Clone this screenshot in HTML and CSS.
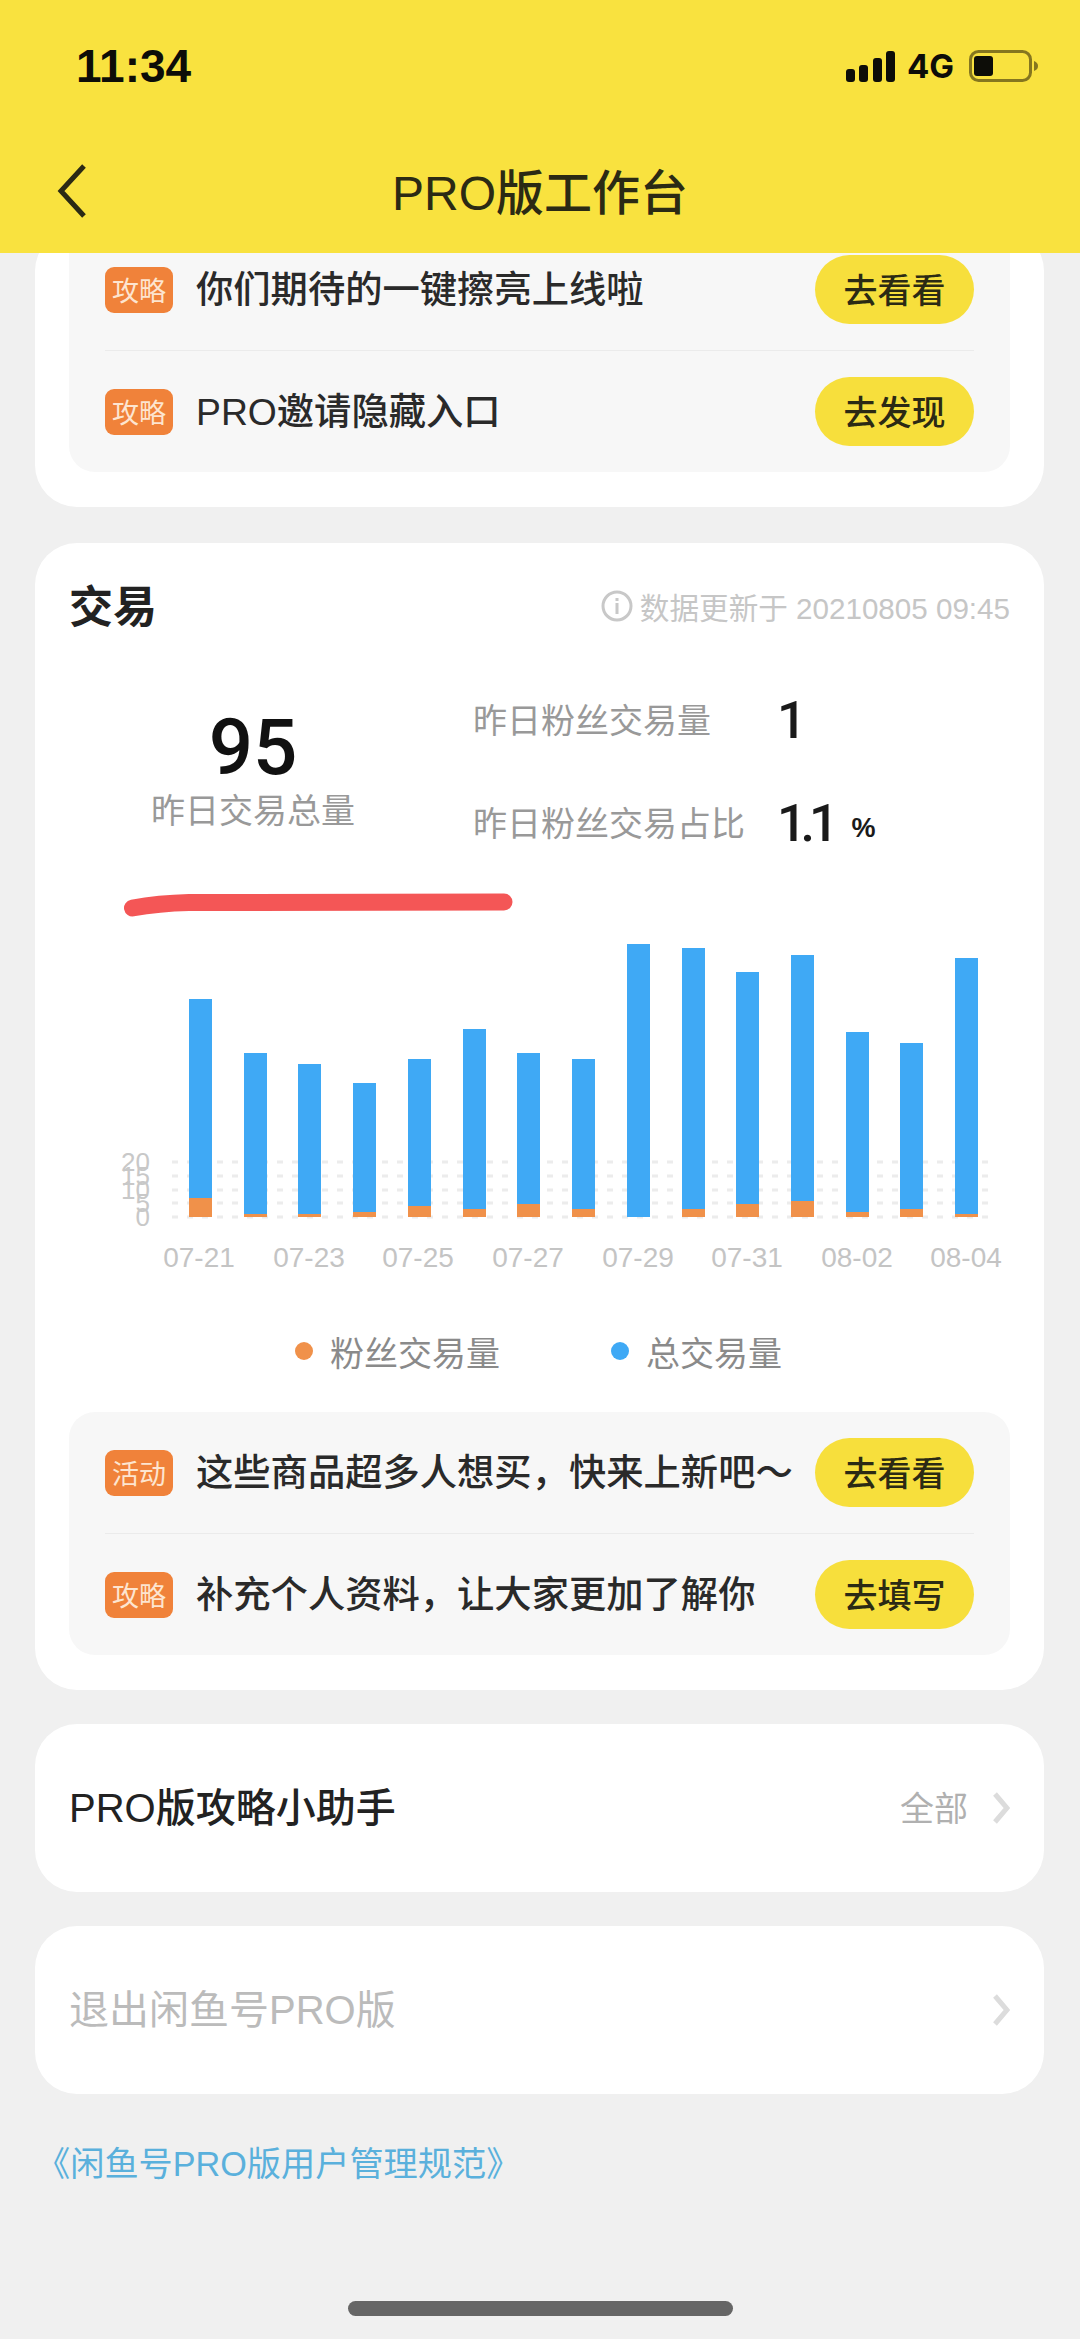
FILE: index.html
```html
<!DOCTYPE html>
<html lang="zh-CN">
<head>
  <meta charset="UTF-8">
  <title>PRO版工作台</title>
  <link rel="stylesheet" href="styles.css">
</head>
<body>

<!-- Header -->
<header class="header">
  <div class="status-bar">
    <span class="time">11:34</span>
    <div class="status-icons">
      <svg class="signal" width="50" height="32" viewBox="0 0 50 32">
        <rect x="0" y="19" width="9" height="13" rx="3"/>
        <rect x="13" y="15" width="9" height="17" rx="3"/>
        <rect x="27" y="8" width="9" height="24" rx="3"/>
        <rect x="40" y="1" width="9" height="31" rx="3"/>
      </svg>
      <span class="network">4G</span>
      <svg class="battery" width="70" height="32" viewBox="0 0 70 32">
        <rect x="1.5" y="1.5" width="60" height="29" rx="8" fill="none" stroke="#85761f" stroke-width="3"/>
        <rect x="5" y="6" width="19" height="20" rx="3" fill="#0d0d08"/>
        <path d="M65 11c3 1 4 3 4 5s-1 4-4 5z" fill="#85761f"/>
      </svg>
    </div>
  </div>
  <nav class="nav">
    <svg class="back" width="32" height="56" viewBox="0 0 32 56">
      <path d="M28 3 5 28l23 25" fill="none" stroke="#2b2a14" stroke-width="5"/>
    </svg>
    <h1 class="nav-title">PRO版工作台</h1>
    <span></span>
  </nav>
</header>

<main class="content">

  <section class="card card-scrolled">
    <div class="tips">
      <div class="tip">
        <span class="tag">攻略</span>
        <span class="tip-text">你们期待的一键擦亮上线啦</span>
        <span class="btn">去看看</span>
      </div>
      <div class="tip">
        <span class="tag">攻略</span>
        <span class="tip-text">PRO邀请隐藏入口</span>
        <span class="btn">去发现</span>
      </div>
    </div>
  </section>

  <section class="card card-trade">
    <div class="card-head">
      <h2 class="card-title">交易</h2>
      <div class="updated">
        <svg width="32" height="32" viewBox="0 0 32 32">
          <circle cx="16" cy="16" r="14" fill="none" stroke="#c8c8c8" stroke-width="3"/>
          <rect x="14.5" y="13" width="3" height="11" fill="#c8c8c8"/>
          <rect x="14.5" y="8" width="3" height="3" fill="#c8c8c8"/>
        </svg>
        <span>数据更新于 20210805 09:45</span>
      </div>
    </div>

    <div class="stats">
      <div class="stat-main">
        <div class="stat-num">95</div>
        <div class="stat-label">昨日交易总量</div>
      </div>
      <div class="stat-side">
        <div class="stat-row">
          <span class="stat-label">昨日粉丝交易量</span>
          <span class="stat-val">1</span>
        </div>
        <div class="stat-row">
          <span class="stat-label">昨日粉丝交易占比</span>
          <span class="stat-val">1.1</span>
          <span class="stat-unit">%</span>
        </div>
      </div>
    </div>

    <!-- Red marker stroke drawn over the screenshot -->
    <svg class="marker" width="400" height="30" viewBox="0 0 400 30">
      <path d="M13.5 18C30 15 50 13 70 12.5L385 12" fill="none" stroke="#f45656" stroke-width="17" stroke-linecap="round"/>
    </svg>

    <svg class="chart" width="941" height="360" viewBox="69 930 941 360">
      <g class="grid">
        <line x1="172" y1="1162" x2="994" y2="1162"/>
        <line x1="172" y1="1176" x2="994" y2="1176"/>
        <line x1="172" y1="1190" x2="994" y2="1190"/>
        <line x1="172" y1="1203" x2="994" y2="1203"/>
        <line x1="172" y1="1217" x2="994" y2="1217"/>
      </g>
      <g class="axis-y">
        <text x="150" y="1171">20</text>
        <text x="150" y="1185">15</text>
        <text x="150" y="1199">10</text>
        <text x="150" y="1212">5</text>
        <text x="150" y="1226">0</text>
      </g>
      <g class="bar-total">
        <rect x="189" y="999" width="23" height="218"/>
        <rect x="244" y="1053" width="23" height="164"/>
        <rect x="298" y="1064" width="23" height="153"/>
        <rect x="353" y="1083" width="23" height="134"/>
        <rect x="408" y="1059" width="23" height="158"/>
        <rect x="463" y="1029" width="23" height="188"/>
        <rect x="517" y="1053" width="23" height="164"/>
        <rect x="572" y="1059" width="23" height="158"/>
        <rect x="627" y="944" width="23" height="273"/>
        <rect x="682" y="948" width="23" height="269"/>
        <rect x="736" y="972" width="23" height="245"/>
        <rect x="791" y="955" width="23" height="262"/>
        <rect x="846" y="1032" width="23" height="185"/>
        <rect x="900" y="1043" width="23" height="174"/>
        <rect x="955" y="958" width="23" height="259"/>
      </g>
      <g class="bar-fans">
        <rect x="189" y="1198" width="23" height="19"/>
        <rect x="244" y="1214" width="23" height="3"/>
        <rect x="298" y="1214" width="23" height="3"/>
        <rect x="353" y="1212" width="23" height="5"/>
        <rect x="408" y="1206" width="23" height="11"/>
        <rect x="463" y="1209" width="23" height="8"/>
        <rect x="517" y="1204" width="23" height="13"/>
        <rect x="572" y="1209" width="23" height="8"/>
        <rect x="682" y="1209" width="23" height="8"/>
        <rect x="736" y="1204" width="23" height="13"/>
        <rect x="791" y="1201" width="23" height="16"/>
        <rect x="846" y="1212" width="23" height="5"/>
        <rect x="900" y="1209" width="23" height="8"/>
        <rect x="955" y="1214" width="23" height="3"/>
      </g>
      <g class="axis-x">
        <text x="199" y="1267">07-21</text>
        <text x="309" y="1267">07-23</text>
        <text x="418" y="1267">07-25</text>
        <text x="528" y="1267">07-27</text>
        <text x="638" y="1267">07-29</text>
        <text x="747" y="1267">07-31</text>
        <text x="857" y="1267">08-02</text>
        <text x="966" y="1267">08-04</text>
      </g>
    </svg>

    <div class="legend">
      <div class="legend-item"><i class="dot dot-fans"></i>粉丝交易量</div>
      <div class="legend-item"><i class="dot dot-total"></i>总交易量</div>
    </div>

    <div class="tips">
      <div class="tip">
        <span class="tag">活动</span>
        <span class="tip-text">这些商品超多人想买，快来上新吧～</span>
        <span class="btn">去看看</span>
      </div>
      <div class="tip">
        <span class="tag">攻略</span>
        <span class="tip-text">补充个人资料，让大家更加了解你</span>
        <span class="btn">去填写</span>
      </div>
    </div>
  </section>

  <section class="card link-card">
    <span class="link-title">PRO版攻略小助手</span>
    <span class="link-more">全部</span>
    <svg class="chev" width="18" height="32" viewBox="0 0 18 32">
      <path d="M3 2l12 14L3 30" fill="none" stroke="#dcdcdc" stroke-width="5"/>
    </svg>
  </section>

  <section class="card link-card">
    <span class="link-title muted">退出闲鱼号PRO版</span>
    <svg class="chev" width="18" height="32" viewBox="0 0 18 32">
      <path d="M3 2l12 14L3 30" fill="none" stroke="#dcdcdc" stroke-width="5"/>
    </svg>
  </section>

  <a class="rules">《闲鱼号PRO版用户管理规范》</a>

  <div class="home-bar"></div>
</main>

</body>
</html>
```

FILE: styles.css
```css
* {
  box-sizing: border-box;
}
html, body {
  height: 100%;
}
body {
  margin: 0;
  height: 2339px;
  display: flex;
  flex-direction: column;
  overflow: hidden;
  background: #f0f0f0;
  color: #222;
  font-family: "Liberation Sans", "Noto Sans CJK SC", sans-serif;
}
h1, h2 {
  margin: 0;
  font-weight: 400;
}

/* Header */
.header {
  flex: none;
  height: 253px;
  padding-top: 40px;
  background: #f9e23f;
}
.status-bar {
  height: 52px;
  padding: 0 41px 0 76px;
  display: flex;
  align-items: center;
  justify-content: space-between;
}
.time {
  font-size: 46px;
  font-weight: 700;
  color: #0d0d08;
}
.status-icons {
  display: flex;
  align-items: center;
}
.signal {
  fill: #0d0d08;
  margin-right: 11px;
}
.network {
  font-family: Inter, sans-serif;
  font-size: 33px;
  font-weight: 700;
  color: #0d0d08;
  margin-right: 15px;
}
.nav {
  height: 84px;
  margin-top: 57px;
  padding: 0 56px;
  display: grid;
  grid-template-columns: 1fr auto 1fr;
  align-items: center;
}
.nav-title {
  padding-bottom: 5px;
  font-size: 48px;
  font-weight: 500;
  color: #2b2a14;
}

/* Cards */
.card {
  flex: none;
  width: 1009px;
  margin: 0 0 36px 35px;
  padding: 0 34px 35px;
  background: #fff;
  border-radius: 42px;
}
.content {
  flex: 1;
  display: flex;
  flex-direction: column;
  overflow: hidden;
}
.card-scrolled {
  margin-top: -24px;
}
.card-trade {
  position: relative;
  margin-bottom: 34px;
}
.card-head {
  height: 126px;
  padding-bottom: 5px;
  display: flex;
  align-items: center;
  justify-content: space-between;
}
.card-title {
  font-size: 44px;
  font-weight: 700;
}
.updated {
  display: flex;
  align-items: center;
  gap: 7px;
  padding-top: 5px;
  font-size: 29.6px;
  color: #c6c6c6;
}

/* Stats */
.stats {
  display: flex;
  gap: 36px;
  height: 206px;
}
.stat-main {
  width: 368px;
  padding-top: 40px;
  text-align: center;
}
.stat-num {
  font-family: Roboto, sans-serif;
  font-size: 78px;
  line-height: 78px;
  font-weight: 500;
  color: #111;
}
.stat-label {
  font-size: 34px;
  line-height: 50px;
  color: #999;
}
.stat-main .stat-label {
  margin-top: -1px;
}
.stat-row {
  height: 103px;
  display: flex;
  align-items: center;
}
.stat-row .stat-label {
  width: 304px;
}
.stat-val {
  font-family: Roboto, sans-serif;
  font-size: 52px;
  font-weight: 500;
  letter-spacing: -6px;
  color: #1a1a1a;
}
.stat-unit {
  font-size: 27px;
  font-weight: 700;
  margin: 10px 0 0 19px;
  color: #1a1a1a;
}
.marker {
  position: absolute;
  left: 84px;
  top: 347px;
}

/* Chart */
.chart {
  display: block;
  margin-top: 55px;
}
.grid line {
  stroke: #ececec;
  stroke-width: 3;
  stroke-dasharray: 6 9;
}
.bar-total rect {
  fill: #3fa9f5;
}
.bar-fans rect {
  fill: #f0914a;
}
.axis-y text {
  font-size: 26px;
  fill: #c8c8c8;
  text-anchor: end;
}
.axis-x text {
  font-size: 28px;
  fill: #c4c4c4;
  text-anchor: middle;
}
.legend {
  height: 50px;
  margin: 36px 0 36px;
  padding-left: 226px;
  display: flex;
  gap: 111px;
}
.legend-item {
  display: flex;
  align-items: center;
  gap: 17px;
  font-size: 34px;
  color: #8a8a8a;
}
.dot {
  width: 18px;
  height: 18px;
  border-radius: 50%;
}
.dot-fans {
  background: #f0914a;
}
.dot-total {
  background: #3fa9f5;
}

/* Tip rows */
.tips {
  padding: 0 36px;
  background: #f7f7f7;
  border-radius: 26px;
}
.tip {
  height: 121px;
  display: flex;
  align-items: center;
}
.tip + .tip {
  border-top: 1px solid #ebebeb;
  height: 122px;
}
.tag {
  flex: none;
  width: 68px;
  height: 46px;
  margin-right: 23px;
  display: flex;
  align-items: center;
  justify-content: center;
  font-size: 27px;
  color: #fde5d0;
  background: #f0823a;
  border-radius: 9px;
}
.tip-text {
  flex: 1;
  padding-bottom: 5px;
  font-size: 37.3px;
  font-weight: 500;
  color: #2a2a2a;
  white-space: nowrap;
}
.btn {
  flex: none;
  width: 159px;
  height: 69px;
  padding-bottom: 2px;
  display: flex;
  align-items: center;
  justify-content: center;
  font-size: 34px;
  font-weight: 500;
  color: #2b2a14;
  background: #f7df3c;
  border-radius: 35px;
}

/* Link cards */
.link-card {
  height: 168px;
  margin-bottom: 34px;
  padding-bottom: 0;
  display: flex;
  align-items: center;
  gap: 24px;
}
.link-title {
  flex: 1;
  padding-bottom: 6px;
  font-size: 40px;
  font-weight: 500;
}
.link-title.muted {
  font-weight: 400;
  color: #bbb;
}
.link-more {
  margin-left: 2px;
  padding-bottom: 4px;
  font-size: 34px;
  color: #b0b0b0;
}
.chev {
  flex: none;
}
.rules {
  margin: 11px 0 0 36px;
  font-size: 34.2px;
  line-height: 50px;
  color: #5ab0dc;
}
.home-bar {
  flex: none;
  width: 385px;
  height: 15px;
  margin: auto 0 23px 348px;
  background: #666;
  border-radius: 8px;
}
```
